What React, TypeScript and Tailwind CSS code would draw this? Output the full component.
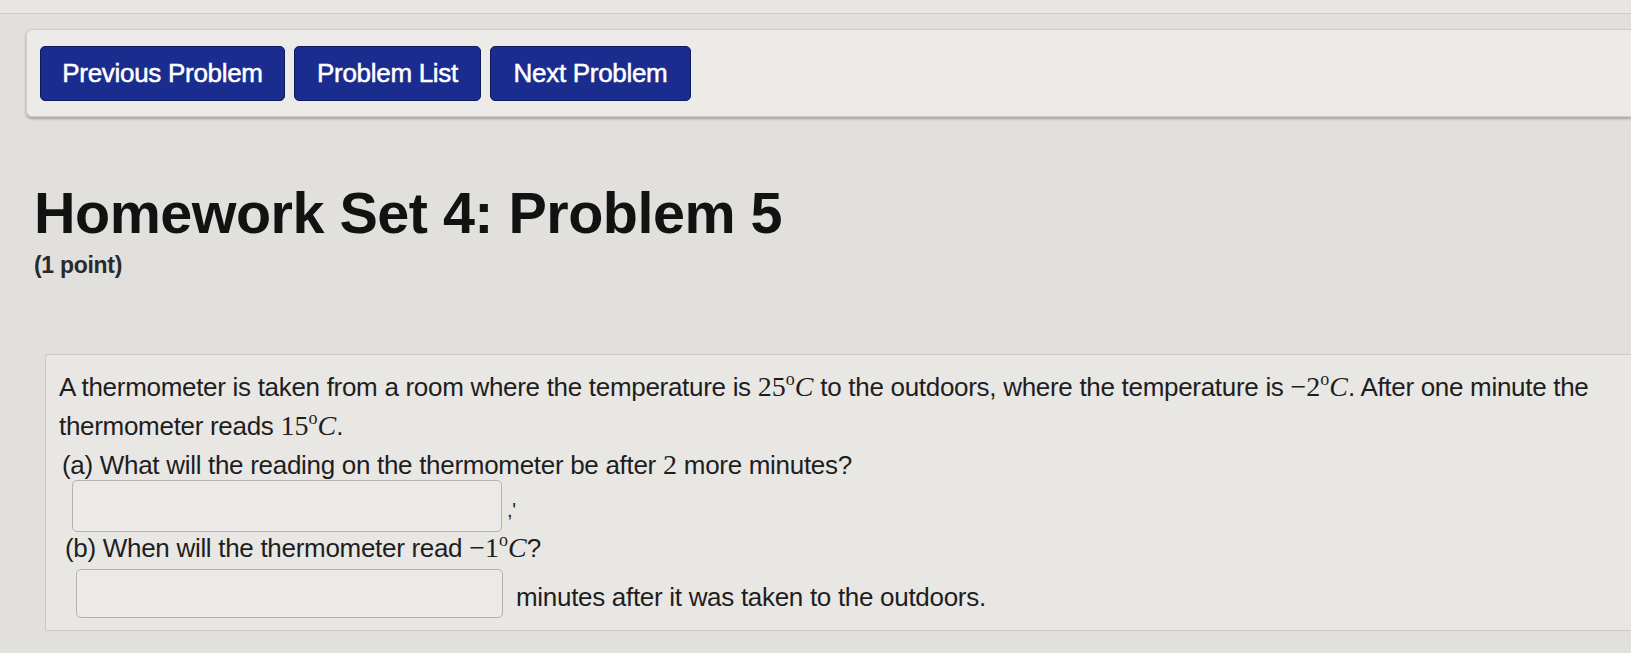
import React from "react";

const sans = { fontFamily: '"Liberation Sans", Arial, sans-serif' };

function M({ children }: { children: React.ReactNode }) {
  return (
    <span className="text-[28px] tracking-normal" style={{ fontFamily: '"Liberation Serif", "Times New Roman", serif' }}>
      {children}
    </span>
  );
}

function Deg({ n, neg }: { n: string; neg?: boolean }) {
  return (
    <M>
      {neg ? "−" : ""}
      {n}
      <span className="text-[18px] relative -top-[11px]">o</span>
      <i>C</i>
    </M>
  );
}

export default function App() {
  return (
    <div className="w-[1631px] h-[653px] overflow-hidden bg-[#e1e0dd] text-[#1c1c1c]" style={sans}>
      <div className="h-[14px] bg-[#e7e6e3] border-b border-[#cbcac7]" />
      <div className="pl-[26px] pt-[15px]">
        <div className="bg-[#ecebe8] rounded-l-[6px] border border-[#d0cecb] border-r-0 shadow-[0_2px_3px_rgba(0,0,0,0.28)] h-[88px] flex items-center gap-[9px] pl-[13px]">
          {["Previous Problem", "Problem List", "Next Problem"].map((t, i) => (
            <div
              key={t}
              className={`h-[55px] flex items-center justify-center bg-[#1a2d8e] border border-[#0e1a62] rounded-[5px] text-white text-[26px] tracking-[-0.3px] [-webkit-text-stroke:0.5px_white] ${
                i === 0 ? "w-[245px]" : i === 1 ? "w-[187px]" : "w-[201px]"
              }`}
            >
              {t}
            </div>
          ))}
        </div>
      </div>

      <div className="pl-[34px] pt-[64px]">
        <h1 className="text-[57.5px] font-bold leading-[64px] tracking-[-0.5px] text-[#121212]">Homework Set 4: Problem 5</h1>
        <div className="text-[23px] font-bold leading-[28px] text-[#2a2a2a] tracking-[-0.3px] mt-[6px]">(1 point)</div>
      </div>

      <div className="ml-[45px] mt-[75px] bg-[#e8e7e4] border border-[#cdcbc8] border-r-0 rounded-tl-[3px] h-[277px] pl-[13px] pt-[14px] text-[26px] leading-[35px] tracking-[-0.3px] text-[#1e1e1e] whitespace-nowrap">
        <div>
          A thermometer is taken from a room where the temperature is <Deg n="25" /> to the outdoors, where the
          temperature is <Deg n="2" neg />. After one minute the
        </div>
        <div>
          thermometer reads <Deg n="15" />.
        </div>
        <div className="ml-[3px]">
          (a) What will the reading on the thermometer be after <M>2</M> more minutes?
        </div>
        <div className="flex items-end ml-[13px] mt-[-3px]">
          <div className="w-[430px] h-[52px] bg-[#ebeae8] border border-[#b3b2af] rounded-[5px]" />
          <span className="ml-[5px] mb-[4px] text-[20px]">,'</span>
        </div>
        <div className="ml-[6px] mt-[-2px]">
          (b) When will the thermometer read <Deg n="1" neg />?
        </div>
        <div className="flex items-center ml-[17px]">
          <div className="w-[427px] h-[49px] bg-[#ebeae8] border border-[#b3b2af] rounded-[5px]" />
          <span className="ml-[13px] mt-[8px]">minutes after it was taken to the outdoors.</span>
        </div>
      </div>
    </div>
  );
}
